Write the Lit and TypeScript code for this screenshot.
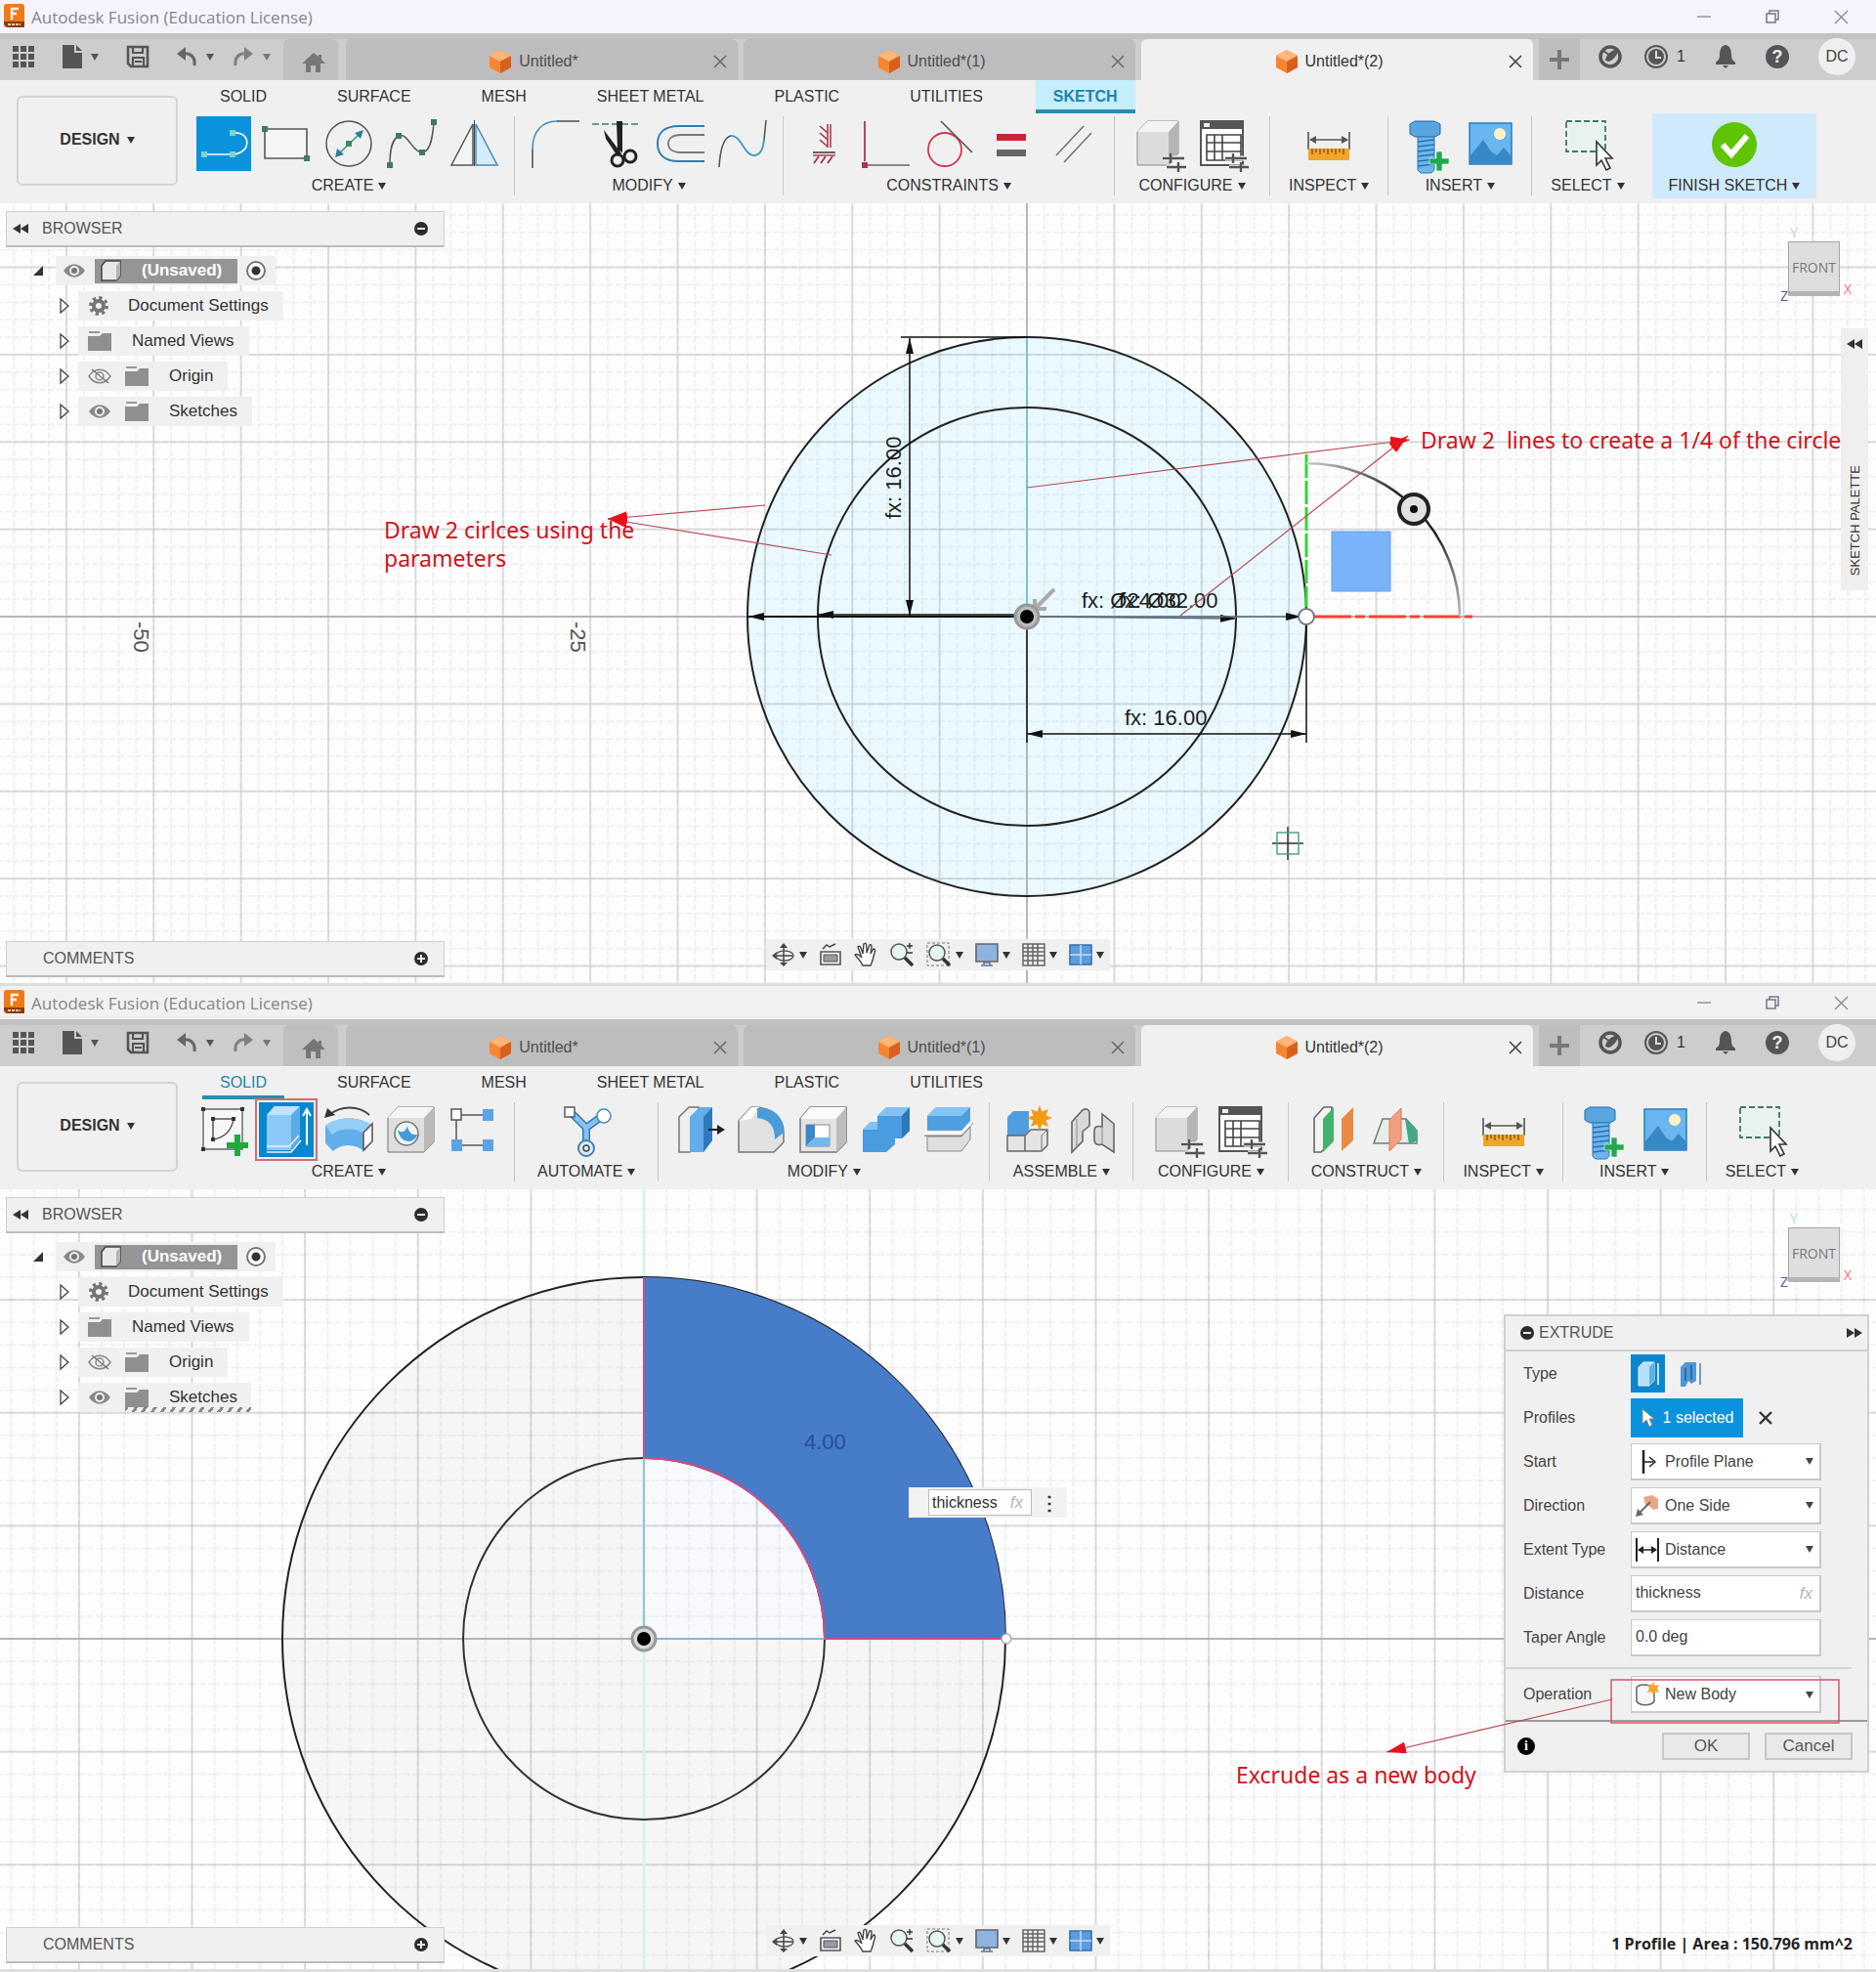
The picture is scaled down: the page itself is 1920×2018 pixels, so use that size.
import { LitElement, html, svg, css, nothing } from "lit";
import { customElement, property } from "lit/decorators.js";
import { classMap } from "lit/directives/class-map.js";

const box = (w: number, h: number, body: unknown) =>
  html`<svg class="ic" width=${w} height=${h} viewBox="0 0 ${w} ${h}" aria-hidden="true">${body}</svg>`;

const big = (body: unknown) => box(56, 56, body);
const caret = () => html`<span class="caret"></span>`;

/* ---------- ribbon icons, 56 x 56 ---------- */

const sliders = svg`<g stroke="#f0f0f0" stroke-width="5"><path d="M30 43h22M34 52h20"/></g><g stroke="#555" stroke-width="2.400"><path d="M30 43h22M34 52h20"/><path d="M38 38v10M46 47v10" /></g>`;

const boltIcon = svg`
  <path d="M9 8l5-3h20l6 3v10l-5 3H14l-5-3z" fill="#58a5e0" stroke="#236fae"/>
  <path d="M17 21h17v34l-3 3H20l-3-3z" fill="#6db5ea" stroke="#2d79b8"/>
  <path d="M17 26l17-2M17 31l17-2M17 36l17-2M17 41l17-2M17 46l17-2M17 51l17-2" stroke="#2471b3" stroke-width="1.6"/>
  <path d="M29 43h7v-7h6v7h7v6h-7v7h-6v-7h-7z" fill="#1faa4c" stroke="#fff" stroke-width="0.6"/>`;

const extrudeBody = svg`
  <path d="M8 13l8-9h26v34l-9 11H8z" fill="#8cc9f8"/>
  <path d="M8 13l8-9h26l-9 9z" fill="#c0e3fc"/>
  <path d="M33 13l9-9v34l-9 11z" fill="#5aabe8"/>
  <path d="M8 45h23l10-11M8 51h25l10-12" stroke="#e4f4ff" fill="none" stroke-width="1.6"/>
  <path d="M49 44V10M45 14l4-7 4 7" stroke="#fff" fill="none" stroke-width="2"/>`;

const icons: Record<string, unknown> = {
  line: svg`<path d="M8 39h29c20-1 19-24 1-22" fill="none" stroke="#fff" stroke-width="1.6"/>
    <g fill="#7fd3c4"><path d="M5 36h6v6H5zM34 36h6v6h-6zM34 14h6v6h-6z"/></g>`,
  rect: svg`<path d="M6 13h43v30H6z" fill="#f4f6f5" stroke="#555" stroke-width="1.6"/>
    <path d="M3 10h6v6H3zM46 40h6v6h-6z" fill="#3f7a63"/>`,
  circle: svg`<circle cx="28" cy="28" r="23" fill="none" stroke="#555" stroke-width="1.5"/>
    <path d="M16 40L41 16" stroke="#2f9a71" stroke-width="1.5"/>
    <path d="M14 42l2-9 7 6zM43 14l-3 9-6-6z" fill="#2b7f96"/><path d="M25 25h6v6h-6z" fill="#3f8a63"/>`,
  spline: svg`<path d="M6 50C6 34 8 24 15 20c9-4 14 17 24 17 9 0 11-18 12-31" fill="none" stroke="#555" stroke-width="1.5"/>
    <path d="M3 47h6v6H3zM12 17h6v6h-6zM36 34h6v6h-6zM48 3h6v6h-6z" fill="#3f7a63"/>`,
  mirror: svg`<path d="M27 8L5 50h22z" fill="#f4f6f5" stroke="#555" stroke-width="1.5"/>
    <path d="M30 8l22 42H30z" fill="#d5ecfb" stroke="#4c89b8" stroke-width="1.5"/><path d="M28.500 4v47" stroke="#444"/>`,
  fillet: svg`<path d="M5 53V34" stroke="#555" stroke-width="1.6"/><path d="M5 34C5 14 16 5 30 5" fill="none" stroke="#3d93b8" stroke-width="1.6"/><path d="M30 5h23" stroke="#555" stroke-width="1.6"/>`,
  trim: svg`<path d="M2 8h50" stroke="#3b7f6c" stroke-width="1.6" stroke-dasharray="7 3"/>
    <path d="M14 14l18 24-4 3-12-18zM27 5h6v32l-5-3z" fill="#222"/>
    <circle cx="28" cy="45" r="6" fill="none" stroke="#222" stroke-width="3"/><circle cx="41" cy="41" r="6" fill="none" stroke="#222" stroke-width="3"/>`,
  offset: svg`<path d="M53 10H27C11 10 5 18 5 28s6 18 22 18h26" fill="none" stroke="#2c7fb4" stroke-width="2"/>
    <path d="M53 19H29c-9 0-13 4-13 9s4 9 13 9h24" fill="none" stroke="#777" stroke-width="1.8"/>`,
  curve: svg`<path d="M4 52C5 34 8 22 16 20" fill="none" stroke="#555" stroke-width="1.6"/><path d="M16 20c11-1 14 22 25 20 7-2 8-9 9-16" fill="none" stroke="#3a9ac2" stroke-width="1.8"/><path d="M50 24l2-20" stroke="#555" stroke-width="1.6"/>`,
  fixed: svg`<path d="M32 8v24M35 8v24" stroke="#a33148" stroke-width="1.5"/><path d="M24 10l8 7M24 17l8 7M24 24l8 7" stroke="#a33148" stroke-width="1.6"/>
    <path d="M17 37h23" stroke="#555" stroke-width="1.8"/><path d="M17 40h23" stroke="#a33148" stroke-width="1.4"/><path d="M18 48l5-7M25 48l5-7M32 48l5-7" stroke="#a33148" stroke-width="1.8"/>`,
  perp: svg`<path d="M6 5v41" stroke="#a8364d" stroke-width="1.8"/><path d="M6 50h46" stroke="#888" stroke-width="1.8"/><path d="M3 47h6v6H3z" fill="#a8364d"/>`,
  tangent: svg`<circle cx="24" cy="34" r="17" fill="none" stroke="#d2384c" stroke-width="1.8"/><path d="M20 5l32 32" stroke="#555" stroke-width="1.6"/>`,
  equal: svg`<path d="M13 18h30v7H13z" fill="#c62536"/><path d="M13 34h30v7H13z" fill="#666"/>`,
  parallel: svg`<path d="M10 40l28-30M18 47l28-30" stroke="#777" stroke-width="1.6"/>`,
  cube: svg`<path d="M4 16L14 5h32v33L36 50H4z" fill="#dcdcdc" stroke="#8b8b8b"/><path d="M4 16L14 5h32L36 16z" fill="#f3f3f3"/><path d="M36 16L46 5v33L36 50z" fill="#b5b5b5"/>${sliders}`,
  table: svg`<path d="M5 5h43v45H5z" fill="#fff" stroke="#555" stroke-width="2"/><path d="M5 5h43v8H5z" fill="#555"/><path d="M8 7h6v4H8z" fill="#eee"/>
    <path d="M11 19h35v26H11zM11 27h35M11 36h35M19 19v26M27 19v26" fill="none" stroke="#444" stroke-width="1.6"/>${sliders}`,
  measure: svg`<path d="M7 16v18M49 16v18M9 24h38" stroke="#555" stroke-width="1.6"/><path d="M8 24l7-4v8zM48 24l-7-4v8z" fill="#555"/>
    <path d="M7 33h42v12H7z" fill="#f0a52a"/><path d="M11 33v6M15 33v4M19 33v6M23 33v4M27 33v6M31 33v4M35 33v6M39 33v4M43 33v6" stroke="#8a5600" stroke-width="1.4"/>`,
  bolt: boltIcon,
  image: svg`<path d="M6 7h43v42H6z" fill="#6bb6ee" stroke="#2c7cbb" stroke-width="1.5"/><circle cx="37" cy="18" r="6" fill="#fbf3c4"/>
    <path d="M7 40l13-16 8 12 6 4 7-8 8 9v7H7z" fill="#3689c6"/>`,
  select: svg`<path d="M6 5h40v31H6z" fill="#e8f3ee" stroke="#3f7a63" stroke-width="1.8" stroke-dasharray="6 3"/>
    <path d="M37 26v24l5-5 5 10 4-2-5-10h7z" fill="#fff" stroke="#333" stroke-width="1.6"/>`,
  finish: svg`<circle cx="28" cy="29" r="23" fill="#5ec404"/><path d="M16 29l9 10 16-19" fill="none" stroke="#fff" stroke-width="6"/>`,
  newSketch: svg`<path d="M7 7h40v41H7z" fill="#f7f7f7" stroke="#666" stroke-width="1.4"/><g fill="#333"><path d="M5 5h4v4H5zM45 5h4v4h-4zM5 46h4v4H5z"/></g>
    <path d="M17 38V17h21c-2 12-8 19-21 21z" fill="none" stroke="#555" stroke-width="1.5"/><g fill="#333"><path d="M15 15h4v4h-4zM36 15h4v4h-4zM15 36h4v4h-4z"/></g>
    <path d="M31 41h8v-8h6v8h8v6h-8v8h-6v-8h-8z" fill="#1faa3c"/>`,
  extrude: svg`<path d="M0 0h56v56H0z" fill="#0a86cf"/>${extrudeBody}`,
  revolve: svg`<path d="M4 24C16 14 40 14 52 24v16l-8 10C34 42 20 42 12 50L4 42z" fill="#62aeea"/><path d="M4 24C16 14 40 14 52 24l-8 8C34 26 20 26 11 33z" fill="#94cdf6"/>
    <path d="M43 31l9-9v18l-9 9z" fill="#fff" stroke="#655" stroke-width="1.6"/><path d="M8 13C20 3 38 3 49 13" fill="none" stroke="#444" stroke-width="1.8"/><path d="M3 16l3-10 8 7z" fill="#333"/>`,
  hole: svg`<path d="M4 16L14 5h37v36L41 51H4z" fill="#dedede" stroke="#777"/><path d="M4 16L14 5h37L41 16z" fill="#f5f5f5"/><path d="M41 16L51 5v36L41 51z" fill="#b9b9b9"/>
    <circle cx="23" cy="32" r="12" fill="#eaf5fd" stroke="#777" stroke-width="1.6"/><path d="M14 28c4 4 8 3 10-4 1 6 4 10 10 9-2 9-17 11-20-5z" fill="#4a97d6"/>`,
  pattern: svg`<path d="M12 13h30M10 15v30M12 44h32" stroke="#555" stroke-width="1.5"/><path d="M5 7h10v11H5z" fill="#fff" stroke="#555" stroke-width="1.5"/>
    <g fill="#5aa4e2"><path d="M37 7h11v12H37zM5 38h11v12H5zM37 38h11v12H37z"/></g>`,
  automate: svg`<path d="M11 9l17 17 18-13M28 26v20" fill="none" stroke="#2f76b8" stroke-width="8" stroke-linejoin="round"/><path d="M11 9l17 17 18-13M28 26v20" fill="none" stroke="#86c3f3" stroke-width="5" stroke-linejoin="round"/>
    <path d="M6 5h10v10H6z" fill="#fff" stroke="#555" stroke-width="1.4"/><circle cx="46" cy="14" r="7" fill="#fff" stroke="#4a8ac5" stroke-width="1.6"/><circle cx="28" cy="47" r="8" fill="#d7ecfb" stroke="#4a7fae" stroke-width="2"/><circle cx="28" cy="47" r="3" fill="none" stroke="#444" stroke-width="1.500"/>`,
  press: svg`<path d="M8 15L18 5h10v35L19 51H8z" fill="#eee" stroke="#777" stroke-width="1.5"/><path d="M19 15L29 5h13v34L33 51H19z" fill="#62aeea"/><path d="M33 15l9-10v34l-9 12z" fill="#2f79ba"/><path d="M38 28h11" stroke="#222" stroke-width="2"/><path d="M47 23l8 5-8 5z" fill="#222"/>`,
  filletBody: svg`<path d="M5 19L18 5c20-1 34 10 33 28v8L41 51H5z" fill="#e2e0e0" stroke="#777" stroke-width="1.5"/><path d="M5 19L18 5h8l-8 12z" fill="#fff"/><path d="M24 6c18-1 27 9 27 25l-9 7c0-14-6-21-18-22z" fill="#4a9bdc"/>`,
  shell: svg`<path d="M4 17L14 5h37v36L41 51H4z" fill="#e3e3e3" stroke="#777" stroke-width="1.5"/><path d="M4 17L14 5h37L41 17z" fill="#fafafa"/><path d="M41 17L51 5v36L41 51z" fill="#bdbdbd"/><path d="M10 23h24v22H10z" fill="#fff" stroke="#888"/><path d="M10 23l9 0v13l-9 9z" fill="#3d88c9"/><path d="M10 45l9-9h15v9z" fill="#73b8ee"/>`,
  combine: svg`<path d="M19 14L28 5h24v24l-8 8h-7v6L28 51H4V28l8-8h7z" fill="#4a9bdf"/><path d="M19 14L28 5h24l-8 9zM4 28l8-8h7v8z" fill="#83c2f2"/><path d="M44 14l8-9v24l-8 8z" fill="#2f77b8"/>`,
  split: svg`<path d="M6 14L15 5h35v14L41 29H6z" fill="#4f9fe0"/><path d="M6 14L15 5h35l-9 9z" fill="#86c4f3"/><path d="M6 35h35l9-10v13L41 50H6z" fill="#dedede" stroke="#888"/><path d="M3 34h38l12-13" fill="none" stroke="#555" stroke-width="1"/><path d="M3 32h38l12-13" fill="none" stroke="#fff" stroke-width="2.500"/>`,
  assemble: svg`<path d="M5 15l6-6h16v20l-5 5H5z" fill="#4f9fe0"/><path d="M5 34h18v16H5zM23 34l6-6h17v16l-6 6H23z" fill="#e6e3e3" stroke="#666" stroke-width="1.5"/><path d="M40 34v16M40 34l6-6" stroke="#777"/>
    <path d="M38 3l2.500 6.500L47 7l-2.500 6.500L51 16l-6.500 2.500L47 25l-6.500-2.500L38 29l-2.500-6.500L29 25l2.500-6.500L25 16l6.500-2.500L29 7l6.500 2.500z" fill="#f59b12"/>`,
  joint: svg`<path d="M7 20L18 8q5-3 7 2v14l-7 6v10L7 51z" fill="#d8dada" stroke="#666" stroke-width="1.6"/><path d="M12 17v29" stroke="#888"/><path d="M50 22L38 12v13q-8-2-8 4v10q1 6 8 4l12 8z" fill="#d8dada" stroke="#666" stroke-width="1.6"/><path d="M38 25v18" stroke="#888"/>`,
  plane: svg`<path d="M7 16L17 5h8v35L14 51H7z" fill="#f4f4f4" stroke="#666" stroke-width="1.6"/><path d="M16 17L27 5v35L16 51z" fill="#43b36b"/><path d="M35 17L47 5v34L35 50z" fill="#e98a44"/>`,
  midplane: svg`<path d="M4 42l9-25h24l11 12v13z" fill="#e4efe9" stroke="#777" stroke-width="1.5"/><path d="M36 17l10 8 3 14-9 4z" fill="#44a98b"/><path d="M20 18L32 6v32L20 50z" fill="#f0a080" stroke="#e07850"/>`,
};

/* ---------- small icons ---------- */

const fusionLogo = box(22, 26, svg`<rect x="0" y="0" width="21" height="24" rx="3" fill="#f07a18"/><path d="M0 18h21v6H3l-3-3z" fill="#8a3b0c"/>
  <path d="M8 16V5h7M8 10h5" stroke="#fff" stroke-width="2.400" fill="none"/><path d="M4 21h13" stroke="#f4c9a3" stroke-width="2" stroke-dasharray="3 1"/>`);
const docCube = box(24, 26, svg`<path d="M12 1l11 6v12l-11 6L1 19V7z" fill="#f58634"/><path d="M12 1l11 6-11 6L1 7z" fill="#ffb67a"/><path d="M12 13l11-6v12l-11 6z" fill="#d9601c"/>`);
const cross = (s: number, c = "#666", w = 1.6) => box(s, s, svg`<path d="M1 1L${s - 1} ${s - 1}M${s - 1} 1L1 ${s - 1}" stroke=${c} stroke-width=${w}/>`);
const gridIcon = box(24, 24, svg`<g fill="#555"><path d="M1 1h6v6H1zM9 1h6v6H9zM17 1h6v6h-6zM1 9h6v6H1zM9 9h6v6H9zM17 9h6v6h-6zM1 17h6v6H1zM9 17h6v6H9zM17 17h6v6h-6z"/></g>`);
const fileIcon = box(20, 24, svg`<path d="M0 0h12v8h8v16H0zM14 0l6 6h-6z" fill="#555"/>`);
const saveIcon = box(22, 22, svg`<path d="M1 1h20v20H4l-3-3z" fill="none" stroke="#555" stroke-width="2.6"/><path d="M6 1h10v6H6zM6 12h11v9H6z" fill="none" stroke="#555" stroke-width="2.200"/><path d="M8 16h7" stroke="#555" stroke-width="2"/>`);
const undoIcon = (c: string, flip: boolean) => box(22, 22, svg`<g transform=${flip ? "matrix(-1 0 0 1 22 0)" : ""}><path d="M7 8c9-1 13 4 12 12" fill="none" stroke=${c} stroke-width="3"/><path d="M10 1v14L1 8z" fill=${c}/></g>`);
const homeIcon = box(24, 22, svg`<path d="M12 1L0 12h4v9h5v-7h5v7h5v-9h5l-4-4V3h-3v2z" fill="#777"/>`);
const jobIcon = box(26, 26, svg`<circle cx="13" cy="13" r="10" fill="none" stroke="#555" stroke-width="3.500"/><path d="M9 16c1-4 5-8 11-10-1 6-5 10-9 11zM6 7l7 5" fill="#555" stroke="#555" stroke-width="2"/>`);
const clockIcon = box(24, 24, svg`<circle cx="12" cy="12" r="11" fill="none" stroke="#555" stroke-width="2"/><circle cx="12" cy="12" r="8" fill="#555"/><path d="M12 6v7h5" fill="none" stroke="#ddd" stroke-width="2"/>`);
const bellIcon = box(22, 26, svg`<path d="M11 1c5 1 6 6 6 10 0 5 2 6 4 8v2H1v-2c2-2 4-3 4-8 0-4 1-9 6-10zM8 22h6l-3 3z" fill="#555"/>`);
const helpIcon = html`<span class="help">?</span>`;
const rewind = box(18, 12, svg`<path d="M9 1v10L1 6zM17 1v10L9 6z" fill="#333"/>`);
const forward = box(16, 12, svg`<path d="M0 1v10l8-5zM8 1v10l8-5z" fill="#333"/>`);
const dotIcon = (plus: boolean) => box(14, 14, svg`<circle cx="7" cy="7" r="7" fill="#2c2c2c"/><path d=${plus ? "M3 7h8M7 3v8" : "M3 7h8"} stroke="#eee" stroke-width="2"/>`);
const eye = box(24, 16, svg`<path d="M1 8C7-1 17-1 23 8 17 17 7 17 1 8z" fill="#8a8a8a"/><circle cx="12" cy="8" r="5" fill="#eee"/><circle cx="12" cy="8" r="3" fill="#777"/>`);
const eyeOff = box(24, 16, svg`<path d="M1 8C7-1 17-1 23 8 17 17 7 17 1 8z" fill="none" stroke="#888" stroke-width="1.5"/><circle cx="12" cy="8" r="4" fill="none" stroke="#888" stroke-width="1.5"/><path d="M4 1l17 14" stroke="#777" stroke-width="1.5"/>`);
const folder = box(24, 20, svg`<path d="M0 5h12l3-3h9v18H0z" fill="#8f8f8f"/><path d="M1 1h11" stroke="#999" stroke-width="2"/>`);
const gear = box(22, 22, svg`<circle cx="11" cy="11" r="5" fill="none" stroke="#757575" stroke-width="4"/><circle cx="11" cy="11" r="8" fill="none" stroke="#757575" stroke-width="4" stroke-dasharray="3.140 3.140"/>`);
const bodyIcon = box(22, 22, svg`<path d="M1 6l4-5h15v15l-4 5H1z" fill="#e8e8e8" stroke="#444" stroke-width="1.5"/><path d="M16 6l4-5v15l-4 5z" fill="#b5b5b5"/>`);
const triRight = box(10, 16, svg`<path d="M1 1l8 7-8 7z" fill="#fafafa" stroke="#444" stroke-width="1.3"/>`);
const triOpen = box(12, 12, svg`<path d="M11 1v10H1z" fill="#333"/>`);

const navIcons = [
  { name: "Orbit", menu: true, art: box(24, 26, svg`<path d="M12 3v20M3 14h18" stroke="#444" stroke-width="1.5"/><path d="M8 6l4-5 4 5zM8 21l4 4 4-4zM5 10l-5 4 5 4z" fill="#444"/><ellipse cx="13" cy="14" rx="9" ry="5" fill="none" stroke="#555" stroke-width="1.400"/>`) },
  { name: "Look at", menu: false, art: box(24, 24, svg`<path d="M2 9h20v13H2z" fill="#f5f5f5" stroke="#555" stroke-width="1.6"/><path d="M5 12h14v7H5z" fill="#9a9aa4" stroke="#555"/><path d="M4 6l4-4 3 2 6-3" stroke="#444" fill="none" stroke-width="1.500"/>`) },
  { name: "Pan", menu: false, art: box(24, 26, svg`<path d="M9 24c-2-5-5-7-8-11 3-2 5 1 7 3L4 5c2-2 3 0 5 7l1-10c3-2 3 1 3 9l3-8c3-1 2 2 1 9l3-5c3 0 1 4 0 8-1 5-2 6-3 9z" fill="#fff" stroke="#444" stroke-width="1.400"/>`) },
  { name: "Zoom", menu: false, art: box(26, 26, svg`<circle cx="10" cy="10" r="8" fill="#e6f5f2" stroke="#555" stroke-width="1.5"/><path d="M16 16l8 8" stroke="#333" stroke-width="3.500"/><path d="M18 4h6M21 1v6M18 11h6" stroke="#333" stroke-width="1.400"/>`) },
  { name: "Fit", menu: true, art: box(26, 26, svg`<path d="M1 1h22v23H1z" fill="none" stroke="#777" stroke-dasharray="3 2"/><circle cx="11" cy="11" r="8" fill="#e6f5f2" stroke="#555" stroke-width="1.5"/><path d="M17 17l7 7" stroke="#333" stroke-width="3.500"/>`) },
  { name: "Display settings", menu: true, art: box(24, 26, svg`<path d="M1 2h22v18H1z" fill="#8fb3df" stroke="#666" stroke-width="1.6"/><path d="M9 21h6v3H9zM6 24h12" stroke="#5d76a4" stroke-width="1.600" fill="none"/>`) },
  { name: "Grid and snaps", menu: true, art: box(24, 24, svg`<path d="M1 1h22v22H1z" fill="#eee"/><path d="M1 1h22v22H1zM1 5h22M1 9h22M1 13h22M1 18h22M6 1v22M11 1v22M16 1v22" fill="none" stroke="#666" stroke-width="1.5"/>`) },
  { name: "Viewports", menu: true, art: box(24, 22, svg`<path d="M1 1h22v20H1z" fill="#5b9ce0" stroke="#3a6da8" stroke-width="1.6"/><path d="M12 1v20M1 11h22" stroke="#c5dcf3" stroke-width="1.500"/>`) },
];

/* ---------- data ---------- */

interface Group { name: string; tools: string[]; wide?: boolean; roomy?: boolean; active?: string; marked?: string; finish?: boolean; }

const tail: Group[] = [
  { name: "INSPECT", tools: ["measure"], wide: true },
  { name: "INSERT", tools: ["bolt", "image"] },
  { name: "SELECT", tools: ["select"], wide: true },
];

const ribbons: Record<string, Group[]> = {
  sketch: [
    { name: "CREATE", tools: ["line", "rect", "circle", "spline", "mirror"], active: "line" },
    { name: "MODIFY", tools: ["fillet", "trim", "offset", "curve"] },
    { name: "CONSTRAINTS", tools: ["fixed", "perp", "tangent", "equal", "parallel"] },
    { name: "CONFIGURE", tools: ["cube", "table"], wide: true },
    ...tail,
    { name: "FINISH SKETCH", tools: ["finish"], finish: true },
  ],
  solid: [
    { name: "CREATE", tools: ["newSketch", "extrude", "revolve", "hole", "pattern"], marked: "extrude" },
    { name: "AUTOMATE", tools: ["automate"], roomy: true },
    { name: "MODIFY", tools: ["press", "filletBody", "shell", "combine", "split"] },
    { name: "ASSEMBLE", tools: ["assemble", "joint"] },
    { name: "CONFIGURE", tools: ["cube", "table"], wide: true },
    { name: "CONSTRUCT", tools: ["plane", "midplane"], wide: true },
    ...tail,
  ],
};

const workspaces = ["SOLID", "SURFACE", "MESH", "SHEET METAL", "PLASTIC", "UTILITIES"];

/* ---------- canvas drawings, in screen units around the sketch origin ---------- */

const gridDefs = (id: string, unit: number) => svg`
  <pattern id="${id}-minor" x="-1" y="-1" width=${unit} height=${unit} patternUnits="userSpaceOnUse">
    <path d="M1 0V${unit}M0 1H${unit}" stroke="#5a6464" stroke-opacity="0.150" stroke-width="1" stroke-dasharray="7 2"/>
  </pattern>
  <pattern id="${id}-major" x="-1" y="-1" width=${unit * 5} height=${unit * 5} patternUnits="userSpaceOnUse">
    <path d="M1 0V${unit * 5}M0 1H${unit * 5}" stroke="#5a6464" stroke-opacity="0.250" stroke-width="1.400"/>
  </pattern>
  <marker id="${id}-dim" viewBox="0 0 16 8" refX="16" refY="4" markerWidth="16" markerHeight="8" markerUnits="userSpaceOnUse" orient="auto-start-reverse"><path d="M0 0l16 4-16 4z" fill="#111"/></marker>`;

const gridFill = (id: string) => svg`
  <rect x="-1100" y="-500" width="2400" height="1000" fill="url(#${id}-minor)"/>
  <rect x="-1100" y="-500" width="2400" height="1000" fill="url(#${id}-major)"/>
  <path d="M-1100 0H1300" stroke="#a9a9a9" stroke-width="1.400"/>`;

const redMarker = (id: string) => svg`
  <marker id=${id} viewBox="0 0 20 12" refX="20" refY="6" markerWidth="20" markerHeight="12" markerUnits="userSpaceOnUse" orient="auto"><path d="M0 0l20 6-20 6z" fill="#e8121c"/></marker>`;

const sketchScene = html`
  <svg class="scene" viewBox="-1051 -423 1920 801" role="img" aria-label="Sketch with two circles">
    <defs>
      ${gridDefs("a", 17.875)}
      <linearGradient id="arc" x1="0" y1="0" x2="1" y2="1"><stop offset="0" stop-color="#ccc"/><stop offset="0.4" stop-color="#222"/><stop offset="0.650" stop-color="#222"/><stop offset="1" stop-color="#bbb"/></linearGradient>
    </defs>
    <rect x="-1051" y="-423" width="1920" height="801" fill="#fdfdfd"/>
    <circle r="286" fill="#e9f9ff"/>
    ${gridFill("a")}
    <path d="M0-423V378" stroke="#9fae9f" stroke-width="1.400"/>
    <path d="M0-286V0" stroke="#7fc0d6" stroke-width="2"/>
    <circle r="286" fill="none" stroke="#222" stroke-width="2"/>
    <circle r="214" fill="none" stroke="#222" stroke-width="2"/>
    <g stroke="#111" stroke-width="1.500" fill="none">
      <path d="M-129-286H0M0 0V129M286 0V129"/>
      <path d="M-120-285V-1" marker-start="url(#a-dim)" marker-end="url(#a-dim)"/>
      <path d="M0 120H286" marker-start="url(#a-dim)" marker-end="url(#a-dim)"/>
      <path d="M-285 0H0" stroke-width="2" marker-start="url(#a-dim)"/>
      <path d="M-214-2H0" marker-start="url(#a-dim)"/>
      <path d="M0 0L214 2" stroke="#5b6f80" marker-end="url(#a-dim)"/>
      <path d="M0 0H281" stroke="#5b6f80" marker-end="url(#a-dim)"/>
    </g>
    <g class="dim">
      <text x="56" y="-9">fx: Ø24.00</text>
      <text x="94" y="-9">fx: Ø32.00</text>
      <text x="100" y="111">fx: 16.00</text>
      <text transform="translate(-129 -100) rotate(-90)">fx: 16.00</text>
      <g fill="#555"><text transform="translate(-914 5) rotate(90)">-50</text><text transform="translate(-467 5) rotate(90)">-25</text></g>
    </g>
    <path d="M10-10L28-28M8-18v10h12" stroke="#aaa" stroke-width="4" fill="none"/>
    <circle r="12" fill="#bbb" stroke="#999" stroke-width="3"/><circle r="7" fill="#000"/>
    <path d="M286-166V-10" stroke="#36d436" stroke-width="3" stroke-dasharray="24 3"/>
    <path d="M294 0H456" stroke="#e43" stroke-width="3" stroke-dasharray="38 4 10 4"/>
    <path d="M286-157A157 157 0 0 1 443 0" fill="none" stroke="url(#arc)" stroke-width="2.500"/>
    <circle cx="396" cy="-110" r="15" fill="#e2e2e2" stroke="#222" stroke-width="4"/><circle cx="396" cy="-110" r="4" fill="#111"/>
    <rect x="312" y="-87" width="60" height="61" fill="#79b3fa" stroke="#62a0ee"/>
    <circle cx="286" cy="0" r="8" fill="#fff" stroke="#777" stroke-width="2"/>
    <path d="M267 215v34M251 232h32" stroke="#333" stroke-width="1.500"/><rect x="256" y="221" width="22" height="22" fill="none" stroke="#4a9a7e" stroke-width="1.400"/>
  </svg>`;

const sketchNotes = html`
  <svg class="notes" viewBox="-1051 -423 1920 801">
    <defs>${redMarker("b-red")}</defs>
    <g stroke="#b84a58" stroke-width="1.200" fill="none">
      <path d="M-268-114L-429-100" marker-end="url(#b-red)"/><path d="M-200-63L-429-100" marker-end="url(#b-red)"/>
      <path d="M0-132L392-181" marker-end="url(#b-red)"/><path d="M157-1L390-185" marker-end="url(#b-red)"/>
    </g>
    <g class="note">
      <text x="-658" y="-80">Draw 2 cirlces using the</text><text x="-658" y="-51">parameters</text>
      <text x="403" y="-172" xml:space="preserve">Draw 2  lines to create a 1/4 of the circle</text>
    </g>
  </svg>`;

const solidScene = html`
  <svg class="scene" viewBox="-659 -460 1920 801" role="img" aria-label="Quarter ring profile selected for extrusion">
    <defs>${gridDefs("c", 23.125)}</defs>
    <rect x="-659" y="-460" width="1920" height="801" fill="#fdfdfd"/>
    <circle r="370" fill="#f6f6f6"/>
    <path d="M0 0V-185A185 185 0 0 1 185 0z" fill="#f8f9ff"/>
    ${gridFill("c")}
    <path d="M0-460V341" stroke="#d5f3ea" stroke-width="3"/>
    <circle r="370" fill="none" stroke="#222" stroke-width="2"/>
    <circle r="185" fill="none" stroke="#333" stroke-width="2"/>
    <path d="M0-370A370 370 0 0 1 370 0H185A185 185 0 0 0 0-185z" fill="#477cc8"/>
    <path d="M370 0H185A185 185 0 0 0 0-185V-370" fill="none" stroke="#d04a86" stroke-width="2"/>
    <path d="M0-185V0H185" fill="none" stroke="#7db8dc" stroke-width="1.600"/>
    <circle cx="371" cy="0" r="5" fill="#fff" stroke="#aaa" stroke-width="1.500"/>
    <circle r="12" fill="#d5d8d7" stroke="#999" stroke-width="3"/><circle r="7" fill="#000"/>
    <text class="depth" x="164" y="-194">4.00</text>
  </svg>`;

const solidNotes = html`
  <svg class="notes" viewBox="-659 -460 1920 801">
    <defs>${redMarker("d-red")}</defs>
    <rect x="990" y="42" width="233" height="44" fill="none" stroke="#d05a66" stroke-width="1.500"/>
    <path d="M991 62L760 116" stroke="#b84a58" stroke-width="1.200" marker-end="url(#d-red)"/>
    <g class="note"><text x="606" y="148">Excrude as a new body</text></g>
  </svg>`;

@customElement("fusion-window")
export class FusionWindow extends LitElement {
  @property() mode: "sketch" | "solid" = "sketch";

  static styles = css`
    :host { display: block; font-family: "Liberation Sans", Arial, sans-serif; font-size: 16px; color: #333; background: #f0f0f0; }
    * { box-sizing: border-box; }
    button, input, select { font: inherit; color: inherit; margin: 0; }
    button { border: 0; background: none; padding: 0; display: inline-flex; align-items: center; justify-content: center; }
    .ic { display: block; flex: none; overflow: visible; }
    .caret { border: 4px solid transparent; border-top: 7px solid currentColor; border-bottom: 0; flex: none; }

    .title { display: flex; align-items: center; height: 34px; padding: 0 28px 0 4px; gap: 6px; background: #f5f4fd; color: #85858c; font-family: "Open Sans", "Noto Sans", sans-serif; font-size: 17px; }
    .solid .title { background: #f1f1f1; color: #858585; }
    .winbtns { margin-left: auto; display: flex; gap: 54px; }
    .winbtns button { width: 16px; height: 20px; }

    .tabbar { display: flex; align-items: stretch; height: 48px; border-top: 6px solid #c2c2c2; background: #cdcdcd; }
    .quick { display: flex; align-items: center; width: 290px; padding: 0 12px 6px; color: #555; }
    .quick .g { display: flex; align-items: center; gap: 9px; }
    .quick .g + .g { margin-left: 28px; }
    .quick .g.save { margin-left: 29px; }
    .quick .g.back { margin-left: 28px; }
    .quick .g.fwd { margin-left: 19px; color: #777; }
    .home { width: 56px; background: #bfbfbf; border-radius: 6px 6px 0 0; margin-right: 8px; padding: 6px 0 0 6px; }
    .docs { flex: 1; display: flex; gap: 6px; min-width: 0; }
    .doc { flex: 1; display: flex; align-items: center; background: #bdbdbd; border-radius: 6px 6px 0 0; padding: 4px 11px 0 8px; color: #4d4d4d; }
    .doc.on { background: #f0f0f0; color: #333; }
    .doc .name { flex: 1; justify-content: center; gap: 7px; }
    .plus { width: 42px; margin-left: 6px; background: #bdbdbd; }
    .account { display: flex; align-items: center; gap: 30px; padding: 0 21px 6px 18px; }
    .jobs { gap: 9px; margin-left: -8px; }
    .help { width: 24px; height: 24px; border-radius: 50%; background: #555; color: #eee; font-weight: bold; font-size: 18px; line-height: 24px; text-align: center; }
    .avatar { width: 38px; height: 38px; border-radius: 50%; background: #efefef; color: #444; }

    .ribbon { display: flex; height: 126px; padding-left: 17px; background: #f0f0f0; }
    .design { width: 165px; height: 92px; margin-top: 16px; border: 2px solid #d3d3d3; border-radius: 6px; font-weight: bold; gap: 7px; padding-bottom: 2px; }
    .ribbonmain { flex: 1; padding-left: 6px; }
    .spaces { display: flex; gap: 36px; height: 34px; padding-left: 19px; }
    .spaces button { padding: 4px 18px 0; border-bottom: 4px solid transparent; }
    .spaces .on { color: #1d84aa; border-bottom-color: #2b8bb0; }
    .sketch .spaces .on { background: #c5edfb; font-weight: bold; }
    .groups { display: flex; }
    .group { display: flex; flex-direction: column; align-items: center; padding: 0 13px; border-right: 1px solid #c6c6c6; margin-top: 3px; height: 81px; }
    .group.wide { padding: 0 19px; }
    .group.roomy { padding: 0 23px; }
    .group:nth-last-child(1), .sketch .group:nth-last-child(2) { border-right: 0; }
    .tools { display: flex; gap: 8px; height: 56px; }
    .tools button { width: 56px; height: 56px; }
    .tools .active { background: #0a92dc; }
    .tools .marked { outline: 2px solid #d26b75; outline-offset: 2px; }
    .group .menu { gap: 5px; height: 30px; flex: none; }
    .group.finish { background: #cfeafb; margin: 0 0 0 9px; padding: 3px 17px 0; height: 87px; }

    .canvas { position: relative; overflow: hidden; border-bottom: 3px solid #dedede; }
    .scene { display: block; width: 100%; margin-bottom: -3px; }
    .notes { position: absolute; inset: 0; width: 100%; pointer-events: none; }
    .note { font-family: "Noto Sans", "Open Sans", sans-serif; font-size: 23px; fill: #d0141e; }
    .dim { font-size: 22px; fill: #1d1d1d; }
    .depth { font-size: 22px; fill: #26509a; }

    .browser { position: absolute; left: 6px; top: 8px; width: 449px; }
    .bar { display: flex; align-items: center; height: 37px; padding: 0 16px 0 5px; gap: 13px; background: #f0f0f0; border: 1px solid #cfcfcf; border-bottom: 2px solid #bbb; color: #555; }
    .bar button:last-child { margin-left: auto; }
    .comments { position: absolute; left: 6px; bottom: 6px; width: 449px; padding-left: 37px; }
    .tree { list-style: none; margin: 6px 0 0; padding: 0 0 0 55px; font-size: 17px; }
    .tree li { display: flex; align-items: center; height: 36px; gap: 9px; }
    .tree .root { margin-left: -28px; gap: 12px; }
    .row { display: flex; align-items: center; height: 30px; padding: 0 15px 0 10px; background: #f0f0f0; gap: 14px; }
    .row .label { padding-left: 5px; }
    .row .folderlabel { padding-left: 7px; }
    .root .row { padding: 0 10px 0 7px; gap: 9px; }
    .sel { display: flex; align-items: center; gap: 20px; height: 25px; padding: 0 16px 0 6px; background: #959595; color: #fff; font-weight: bold; }
    .radio { appearance: none; width: 20px; height: 20px; border: 2px solid #777; border-radius: 50%; background: radial-gradient(#333 0 4px, #fff 5px); }
    .row.edited { padding: 0 14px 0 0; margin-right: -15px; background: repeating-linear-gradient(125deg, #888 0 3px, transparent 3px 8px) bottom / 100% 5px no-repeat, #f0f0f0; }

    .nav { position: absolute; left: 50%; bottom: 13px; transform: translateX(-50%); display: flex; align-items: center; gap: 12px; padding: 0 6px; height: 32px; background: #f0f0f0; color: #333; }
    .nav button { gap: 4px; }

    .viewcube { position: absolute; right: 37px; top: 39px; width: 53px; height: 56px; border: 1px solid #a5a5ab; border-bottom: 5px solid #b5b5b8; background: #dededf; color: #77777c; font: 14px "Open Sans", sans-serif; display: flex; align-items: center; justify-content: center; }
    .ax { position: absolute; font-size: 14px; line-height: 14px; }
    .ax.x { right: -13px; bottom: -5px; color: #ee7480; }
    .ax.y { left: 1px; top: -17px; color: #b9ddc9; }
    .ax.z { left: -9px; bottom: -12px; color: #5a5aa8; }
    .palette { position: absolute; right: 8px; top: 128px; width: 28px; height: 268px; background: #efefef; display: flex; flex-direction: column; align-items: center; justify-content: space-between; padding: 10px 0 15px; }
    .palette span { writing-mode: vertical-rl; transform: rotate(180deg); font-size: 13px; }

    .inplace { position: absolute; left: 930px; top: 305px; display: flex; align-items: center; height: 31px; padding-left: 20px; background: #f2f2f2; }
    .inplace input { width: 106px; height: 27px; border: 1px solid #bbb; padding: 0 3px; background: #fff; }
    .inplace button { width: 36px; height: 31px; font-weight: bold; font-size: 20px; }
    .field { position: relative; display: flex; align-items: center; }
    .fx { position: absolute; right: 9px; color: #b5b5b5; font-style: italic; font-size: 17px; }

    .panel { position: absolute; right: 7px; top: 128px; width: 374px; background: #f0f0f0; border: 2px solid #d0d0d0; }
    .panel header { display: flex; align-items: center; height: 36px; gap: 5px; padding: 0 5px 0 15px; border-bottom: 2px solid #cfcfcf; color: #555; }
    .panel header button:last-child { margin-left: auto; }
    .prop { display: grid; grid-template-columns: 110px 195px; align-items: center; height: 45px; padding-left: 18px; color: #444; }
    .prop select, .prop .txt { width: 100%; height: 38px; border: 1px solid #c9c9c9; border-width: 1px 2px 2px 1px; border-radius: 0; background: #fff; padding: 0 34px; appearance: none; }
    .prop .txt { padding: 0 4px; }
    .field > .ic { position: absolute; left: 5px; }
    .field > .caret { position: absolute; right: 8px; }
    .types { display: flex; gap: 8px; }
    .types button { width: 35px; height: 39px; }
    .types .on { background: #0a86cf; }
    .pick { display: flex; gap: 16px; }
    .pick .chosen { width: 115px; height: 40px; background: #0a92dc; color: #fff; gap: 9px; }
    .op { margin: 8px 16px 0 0; border-top: 2px solid #d5d5d5; height: 54px; }
    .panel footer { display: flex; align-items: center; gap: 15px; height: 52px; border-top: 2px solid #999; padding: 0 15px 0 12px; color: #555; }
    .panel footer button.push { width: 90px; height: 28px; border: 2px solid #c6c6c6; background: #e9e9e9; font-size: 17px; }
    .info { width: 18px; height: 18px; border-radius: 50%; background: #000; color: #fff; font: bold 14px/18px "Liberation Serif", serif; text-align: center; margin-right: auto; }
    .status { position: absolute; right: 24px; bottom: 15px; font: bold 16px/22px "Open Sans", sans-serif; color: #222; }
  `;

  private doc(name: string, on = false) {
    return html`<div class=${classMap({ doc: true, on })}>
      <button class="name">${docCube}<span>${name}</span></button>
      <button aria-label="Close ${name}">${cross(14, on ? "#444" : "#6a6a6a")}</button>
    </div>`;
  }

  private header() {
    return html`
      <div class="title">${fusionLogo}<span>Autodesk Fusion (Education License)</span>
        <div class="winbtns">
          <button aria-label="Minimize">${box(14, 14, svg`<path d="M0 7h14" stroke="#8d8b9c" stroke-width="1.400"/>`)}</button>
          <button aria-label="Restore">${box(14, 14, svg`<path d="M1 4h9v9H1zM4 4V1h9v9h-3" fill="none" stroke="#77758a" stroke-width="1.500"/>`)}</button>
          <button aria-label="Close window">${cross(15, "#88869a", 1.3)}</button>
        </div>
      </div>
      <div class="tabbar">
        <div class="quick">
          <div class="g"><button aria-label="Data panel">${gridIcon}</button></div>
          <button class="g" aria-label="File">${fileIcon}${caret()}</button>
          <button class="g save" aria-label="Save">${saveIcon}</button>
          <button class="g back" aria-label="Undo">${undoIcon("#666", false)}${caret()}</button>
          <button class="g fwd" aria-label="Redo">${undoIcon("#808080", true)}${caret()}</button>
        </div>
        <button class="home" aria-label="Home">${homeIcon}</button>
        <div class="docs">${this.doc("Untitled*")}${this.doc("Untitled*(1)")}${this.doc("Untitled*(2)", true)}</div>
        <button class="plus" aria-label="New design">${box(20, 20, svg`<path d="M10 0v20M0 10h20" stroke="#777" stroke-width="4"/>`)}</button>
        <div class="account">
          <button aria-label="Extensions">${jobIcon}</button>
          <button class="jobs" aria-label="Job status">${clockIcon}<span>1</span></button>
          <button aria-label="Notifications">${bellIcon}</button>
          <button aria-label="Help">${helpIcon}</button>
          <button class="avatar">DC</button>
        </div>
      </div>`;
  }

  private ribbon() {
    const active = this.mode === "sketch" ? "SKETCH" : "SOLID";
    const tabs = this.mode === "sketch" ? [...workspaces, "SKETCH"] : workspaces;
    return html`<div class="ribbon">
      <button class="design">DESIGN ${caret()}</button>
      <div class="ribbonmain">
        <nav class="spaces">${tabs.map((t) => html`<button class=${t === active ? "on" : ""}>${t}</button>`)}</nav>
        <div class="groups">${ribbons[this.mode].map((g) => html`
          <section class=${classMap({ group: true, wide: !!g.wide, roomy: !!g.roomy, finish: !!g.finish })}>
            <div class="tools">${g.tools.map((t) => html`
              <button aria-label=${t} class=${classMap({ active: g.active === t, marked: g.marked === t })}>${big(icons[t])}</button>`)}</div>
            <button class="menu">${g.name}${caret()}</button>
          </section>`)}</div>
      </div>
    </div>`;
  }

  private browser() {
    const edited = this.mode === "solid";
    return html`
      <aside class="browser">
        <div class="bar"><button aria-label="Collapse">${rewind}</button><span>BROWSER</span><button aria-label="Minimize browser">${dotIcon(false)}</button></div>
        <ul class="tree">
          <li class="root">${triOpen}<div class="row">${eye}<span class="sel">${bodyIcon}(Unsaved)</span><input class="radio" type="radio" checked aria-label="Activate component" /></div></li>
          <li>${triRight}<div class="row">${gear}<span class="label">Document Settings</span></div></li>
          <li>${triRight}<div class="row">${folder}<span class="folderlabel">Named Views</span></div></li>
          <li>${triRight}<div class="row">${eyeOff}${folder}<span class="folderlabel">Origin</span></div></li>
          <li>${triRight}<div class="row">${eye}${edited
            ? html`<span class="row edited">${folder}<span class="folderlabel">Sketches</span></span>`
            : html`${folder}<span class="folderlabel">Sketches</span>`}</div></li>
        </ul>
      </aside>
      <div class="bar comments"><span>COMMENTS</span><button aria-label="Add comment">${dotIcon(true)}</button></div>
      <nav class="nav">${navIcons.map((n) => html`<button aria-label=${n.name}>${n.art}${n.menu ? caret() : nothing}</button>`)}</nav>
      <div class="viewcube">FRONT<span class="ax x">X</span><span class="ax y">Y</span><span class="ax z">Z</span></div>`;
  }

  private choice(id: string, label: string, value: string, art: unknown, cls = "") {
    return html`<div class="prop ${cls}"><label for=${id}>${label}</label>
      <div class="field"><select id=${id}><option>${value}</option></select>${art}${caret()}</div></div>`;
  }

  private extrudePanel() {
    return html`
      <section class="panel">
        <header><button aria-label="Minimize panel">${dotIcon(false)}</button><span>EXTRUDE</span><button aria-label="Dock">${forward}</button></header>
        <div class="prop"><span>Type</span><div class="types">
          <button class="on" aria-label="Solid extrude">${box(24, 28, svg`<path d="M2 7l5-5h11v19l-5 5H2z" fill="#b5defc" stroke="#e8f6ff"/><path d="M13 7l5-5v19l-5 5z" fill="#5fb0ec"/><path d="M22 25V3" stroke="#fff" stroke-width="1.500"/>`)}</button>
          <button aria-label="Thin extrude">${box(24, 28, svg`<path d="M2 7l5-5h11v19l-5 3-3-3-3 6H2z" fill="#4f97d6"/><path d="M7 8v13M13 5v15" stroke="#2c6eaa" stroke-width="2"/><path d="M22 25V3" stroke="#4a7fb0" stroke-width="1.500"/>`)}</button>
        </div></div>
        <div class="prop"><span>Profiles</span><div class="pick">
          <button class="chosen">${box(14, 20, svg`<path d="M2 1v15l4-4 3 7 3-2-3-6h5z" fill="#fff" stroke="#888"/>`)}1 selected</button>
          <button aria-label="Clear selection">${cross(14, "#333", 2.4)}</button></div></div>
        ${this.choice("start", "Start", "Profile Plane", box(24, 26, svg`<path d="M8 1v24" stroke="#222" stroke-width="2.500"/><path d="M8 13h10" stroke="#222" stroke-width="1.500"/><path d="M14 8l6 5-6 5" stroke="#222" fill="none" stroke-width="1.500"/>`))}
        ${this.choice("direction", "Direction", "One Side", box(24, 26, svg`<path d="M8 4l9-2 6 4v10l-5 1-4-4-4-1z" fill="#eba58a"/><path d="M15 9L3 21" stroke="#666" stroke-width="2"/><path d="M0 24l2-8 6 6z" fill="#666"/>`))}
        ${this.choice("extent", "Extent Type", "Distance", box(24, 26, svg`<path d="M1 1v24M23 1v24" stroke="#222" stroke-width="2"/><path d="M3 13h18" stroke="#222" stroke-width="1.500"/><path d="M2 13l6-4v8zM22 13l-6-4v8z" fill="#222"/>`))}
        <div class="prop"><label for="distance">Distance</label><div class="field"><input id="distance" class="txt" value="thickness" /><span class="fx">fx</span></div></div>
        <div class="prop"><label for="taper">Taper Angle</label><div class="field"><input id="taper" class="txt" value="0.0 deg" /></div></div>
        ${this.choice("operation", "Operation", "New Body", box(24, 26, svg`<path d="M1 6c2-4 12-4 18 0v14c-3 5-15 5-18 0z" fill="#f5f5f7" stroke="#666" stroke-width="1.500"/><path d="M18 0l2 4 4-1-2 4 2 4-4-1-2 3-2-3-4 1 2-4-2-4 4 1z" fill="#f5a623"/>`), "op")}
        <footer><span class="info">i</span><button class="push">OK</button><button class="push">Cancel</button></footer>
      </section>
      <div class="inplace"><div class="field"><input aria-label="Extrude distance" value="thickness" /><span class="fx">fx</span></div><button aria-label="More">⋮</button></div>
      <div class="status">1 Profile | Area : 150.796 mm^2</div>`;
  }

  render() {
    const sketch = this.mode === "sketch";
    return html`<div class=${this.mode}>
      ${this.header()}${this.ribbon()}
      <main class="canvas">
        ${sketch ? sketchScene : solidScene}
        ${this.browser()}
        ${sketch ? html`<aside class="palette"><button aria-label="Expand palette">${rewind}</button><span>SKETCH PALETTE</span></aside>` : this.extrudePanel()}
        ${sketch ? sketchNotes : solidNotes}
      </main>
    </div>`;
  }
}

@customElement("app-root")
export class AppRoot extends LitElement {
  static styles = css`:host { display: block; }`;
  render() {
    return html`<fusion-window mode="sketch"></fusion-window><fusion-window mode="solid"></fusion-window>`;
  }
}
